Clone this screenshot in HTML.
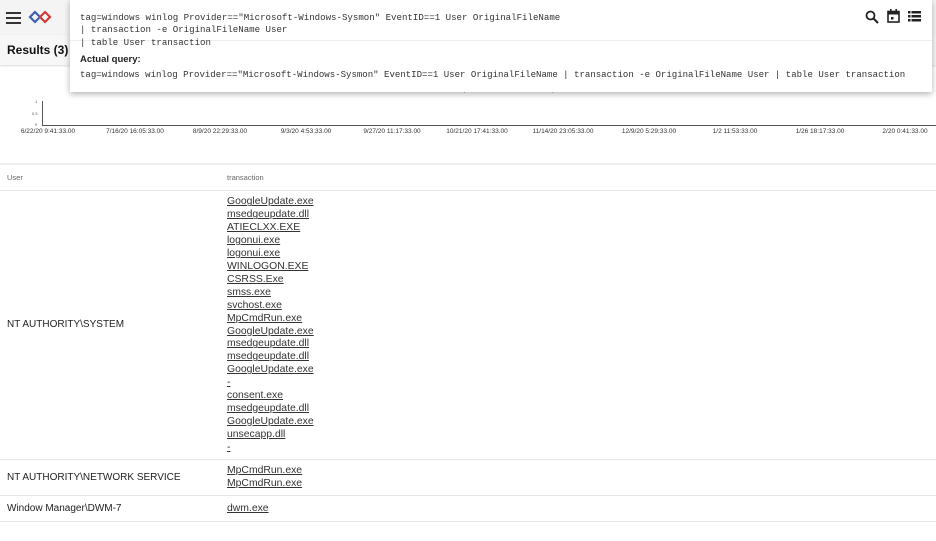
<!DOCTYPE html>
<html><head><meta charset="utf-8"><style>
*{margin:0;padding:0;box-sizing:border-box}
body{width:936px;height:541px;overflow:hidden;background:#fff;font-family:"Liberation Sans",sans-serif;color:#222;position:relative}
.top{position:absolute;left:0;top:0;width:936px;height:35px;background:#f4f4f4}
.resbar{position:absolute;left:0;top:35px;width:936px;height:30px;background:#f7f7f7;box-shadow:0 1px 2px rgba(0,0,0,.15)}
.resbar span{position:absolute;left:7px;top:8px;font-size:12px;font-weight:bold;color:#111}
.card{position:absolute;left:70px;top:0;width:862px;height:92px;background:#fff;box-shadow:0 2px 6px rgba(0,0,0,.3);font-family:"Liberation Mono",monospace;font-size:9.1px;color:#333}
.card .q{position:absolute;left:10px;top:12px;line-height:12.3px;white-space:pre;z-index:2}
.card .sep{position:absolute;left:0;right:0;top:40px;border-top:1px solid #eee;z-index:1}
.card .aq{position:absolute;left:10px;top:54px;font-family:"Liberation Sans",sans-serif;font-weight:bold;font-size:9.5px;color:#222}
.card .a{position:absolute;left:10px;top:69px;white-space:pre;font-size:9.05px}
.lbl{position:absolute;top:128px;font-size:6.5px;color:#333;transform:translateX(-50%);white-space:nowrap}
table{position:absolute;left:0;top:163px;width:936px;border-collapse:collapse;border-top:2px solid #eee}
td{border-bottom:1px solid #e6e6e6;font-size:10px;vertical-align:middle}
th{font-size:7.5px;color:#666;font-weight:normal;text-align:left;height:26px;border-bottom:1px solid #e6e6e6}
td.u{padding-left:7px;width:227px}
td.t{line-height:12.9px;font-size:10.4px;padding-top:2px}
td.t a{color:#333;text-decoration:underline;display:block}
</style></head><body>
<div class="top"></div>
<div style="position:absolute;left:6px;top:12px;width:15px;height:2px;background:#333;box-shadow:0 5px 0 #333,0 10px 0 #333"></div>
<svg style="position:absolute;left:28px;top:10px" width="26" height="14" viewBox="0 0 26 14"><path d="M2 7 L7 2 L12 7 L7 12 Z" fill="none" stroke="#3e5fb0" stroke-width="2.2"/><path d="M12 7 L17 2 L22 7 L17 12 Z" fill="none" stroke="#d23a3a" stroke-width="2.2"/></svg>
<div class="resbar"><span>Results (3) &nbsp;|</span></div>
<div style="position:absolute;left:425px;top:87px;font-size:7px;color:#444">Jun 22 2020, 9:41:33 AM to Mar 22 2021, 9:41:33 AM</div>
<div class="card">
<div class="sep"></div>
<div class="q">tag=windows winlog Provider=="Microsoft-Windows-Sysmon" EventID==1 User OriginalFileName
| transaction -e OriginalFileName User
| table User transaction</div>
<div class="aq">Actual query:</div>
<div class="a">tag=windows winlog Provider=="Microsoft-Windows-Sysmon" EventID==1 User OriginalFileName | transaction -e OriginalFileName User | table User transaction</div>
<svg style="position:absolute;left:795px;top:10px" width="14" height="14" viewBox="0 0 14 14"><circle cx="5.5" cy="5.5" r="4" fill="none" stroke="#222" stroke-width="1.8"/><path d="M8.5 8.5 L13 13" stroke="#222" stroke-width="2"/></svg>
<svg style="position:absolute;left:817px;top:9px" width="13" height="14" viewBox="0 0 13 14"><rect x="1" y="2.5" width="11" height="10.5" fill="none" stroke="#222" stroke-width="1.6"/><rect x="1" y="2.5" width="11" height="3" fill="#222"/><rect x="3" y="0" width="1.6" height="3" fill="#222"/><rect x="8.4" y="0" width="1.6" height="3" fill="#222"/><rect x="4" y="8" width="2.5" height="2.5" fill="#222"/></svg>
<svg style="position:absolute;left:838px;top:11px" width="13" height="11" viewBox="0 0 13 11"><g fill="#222"><rect x="0" y="0" width="2.5" height="2.5"/><rect x="3.5" y="0" width="9.5" height="2.5"/><rect x="0" y="4" width="2.5" height="2.5"/><rect x="3.5" y="4" width="9.5" height="2.5"/><rect x="0" y="8" width="2.5" height="2.5"/><rect x="3.5" y="8" width="9.5" height="2.5"/></g></svg>
</div>
<div style="position:absolute;left:42px;top:101px;width:1px;height:25px;background:#555"></div>
<div style="position:absolute;left:42px;top:125px;width:894px;height:1px;background:#555"></div>
<div style="position:absolute;left:35px;top:99px;font-size:4px;color:#555">1</div>
<div style="position:absolute;left:32px;top:111px;font-size:4px;color:#555">0.5</div>
<div style="position:absolute;left:35px;top:122px;font-size:4px;color:#555">0</div>
<div class="lbl" style="left:48px">6/22/20 9:41:33.00</div>
<div class="lbl" style="left:135px">7/16/20 16:05:33.00</div>
<div class="lbl" style="left:220px">8/9/20 22:29:33.00</div>
<div class="lbl" style="left:306px">9/3/20 4:53:33.00</div>
<div class="lbl" style="left:392px">9/27/20 11:17:33.00</div>
<div class="lbl" style="left:477px">10/21/20 17:41:33.00</div>
<div class="lbl" style="left:563px">11/14/20 23:05:33.00</div>
<div class="lbl" style="left:649px">12/9/20 5:29:33.00</div>
<div class="lbl" style="left:735px">1/2 11:53:33.00</div>
<div class="lbl" style="left:820px">1/26 18:17:33.00</div>
<div class="lbl" style="left:905px">2/20 0:41:33.00</div>
<table>
<tr><th style="padding-left:7px">User</th><th>transaction</th></tr>
<tr style="height:269px"><td class="u">NT AUTHORITY\SYSTEM</td><td class="t"><a>GoogleUpdate.exe</a><a>msedgeupdate.dll</a><a>ATIECLXX.EXE</a><a>logonui.exe</a><a>logonui.exe</a><a>WINLOGON.EXE</a><a>CSRSS.Exe</a><a>smss.exe</a><a>svchost.exe</a><a>MpCmdRun.exe</a><a>GoogleUpdate.exe</a><a>msedgeupdate.dll</a><a>msedgeupdate.dll</a><a>GoogleUpdate.exe</a><a>-</a><a>consent.exe</a><a>msedgeupdate.dll</a><a>GoogleUpdate.exe</a><a>unsecapp.dll</a><a>-</a></td></tr>
<tr style="height:36px"><td class="u">NT AUTHORITY\NETWORK SERVICE</td><td class="t"><a>MpCmdRun.exe</a><a>MpCmdRun.exe</a></td></tr>
<tr style="height:26px"><td class="u">Window Manager\DWM-7</td><td class="t"><a>dwm.exe</a></td></tr>
</table>
</body></html>
